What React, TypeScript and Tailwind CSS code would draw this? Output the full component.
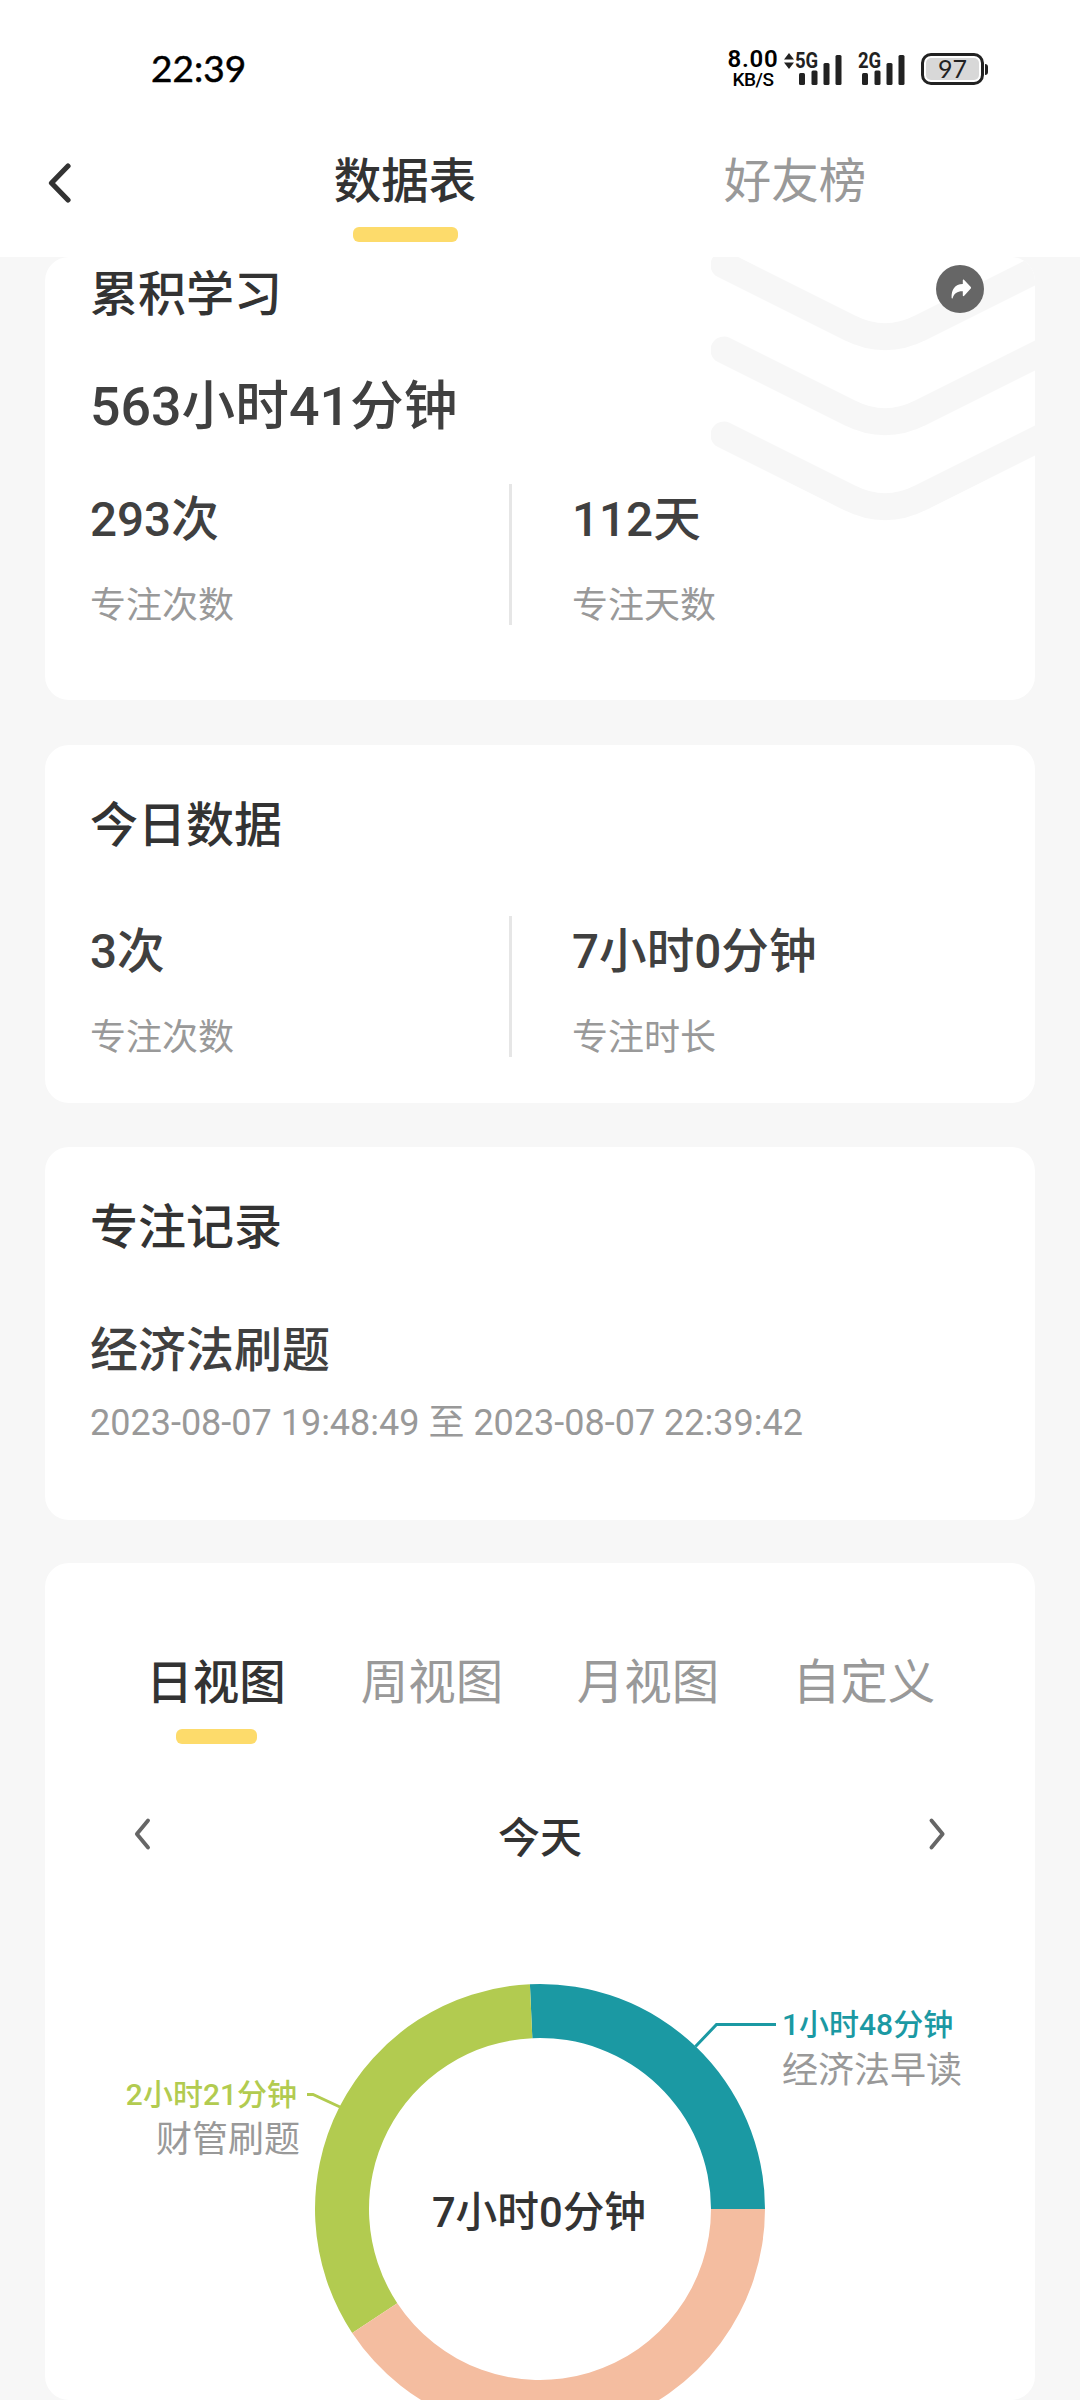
import type { ReactNode } from 'react'

const CENTER = 225
const OUTER = 225
const INNER = 171

const slices = [
  { name: '经济法早读', minutes: 108, color: '#1b99a3' },
  { name: '财管刷题', minutes: 141, color: '#b2cb50' },
  { name: '经济法刷题', minutes: 171, color: '#f4bda0' },
]

const headerTabs = ['数据表', '好友榜']
const viewTabs = ['日视图', '周视图', '月视图', '自定义']

function point(radius: number, angle: number) {
  return `${CENTER + radius * Math.cos(angle)} ${CENTER - radius * Math.sin(angle)}`
}

function arcPath(start: number, end: number) {
  return [
    `M ${point(OUTER, start)}`,
    `A ${OUTER} ${OUTER} 0 0 0 ${point(OUTER, end)}`,
    `L ${point(INNER, end)}`,
    `A ${INNER} ${INNER} 0 0 1 ${point(INNER, start)}`,
    'Z',
  ].join(' ')
}

function Chevron({ className, d, width }: { className: string; d: string; width: number }) {
  return (
    <svg viewBox="0 0 24 44" className={className} fill="none" stroke="currentColor" strokeWidth={width} strokeLinecap="round" strokeLinejoin="round">
      <path d={d} />
    </svg>
  )
}

function Signal({ label }: { label: string }) {
  return (
    <div className="relative h-8 w-12 text-[#222]">
      <span className="absolute -top-px -left-px origin-left scale-x-[0.84] text-[22px] leading-[18px] font-bold">{label}</span>
      <svg viewBox="0 0 48 32" className="h-8 w-12" fill="currentColor">
        <rect x="3" y="20" width="6" height="12" rx="1.5" />
        <rect x="15.5" y="17.5" width="6" height="14.5" rx="1.5" />
        <rect x="27.5" y="10" width="6" height="22" rx="1.5" />
        <rect x="39.5" y="2" width="6" height="30" rx="1.5" />
      </svg>
    </div>
  )
}

function StatusBar() {
  return (
    <div className="flex h-[138px] items-center justify-between pr-[92px] pl-[151px]">
      <span className="-mt-1 font-[Lato] text-[37px] leading-none text-black [-webkit-text-stroke:0.5px_black]">22:39</span>
      <div className="flex items-center">
        <div className="flex w-[52px] flex-col items-center text-black">
          <span className="text-[24px] leading-[18px] font-semibold tracking-[0.8px]">8.00</span>
          <span className="mt-[4px] text-[19px] leading-[16px] font-medium tracking-[-0.5px]">KB/S</span>
        </div>
        <svg viewBox="0 0 10 32" className="ml-[5px] h-8 w-2.5" fill="#222">
          <path d="M5 0 10 6.5H0zM5 16 0 9.5h10z" />
        </svg>
        <div className="ml-0.5 flex gap-[15px]">
          <Signal label="5G" />
          <Signal label="2G" />
        </div>
        <div className="ml-[14px] flex items-center">
          <div className="h-8 w-[63px] rounded-[10px] border-[3px] border-[#222] p-[2px]">
            <div className="flex h-full items-center justify-center rounded-[5px] bg-[#d8d8d8] pb-0.5 font-[Lato] text-[25px] leading-none text-[#222]">97</div>
          </div>
          <div className="ml-px h-[11px] w-[3px] rounded-r-sm bg-[#222]" />
        </div>
      </div>
    </div>
  )
}

function Header() {
  return (
    <header className="h-[257px] bg-white">
      <StatusBar />
      <div className="flex">
        <button className="flex h-[89px] w-[210px] items-center pl-[47px] text-[#333]">
          <Chevron className="h-11 w-6" d="M21 5 4.5 22 21 39" width={5.2} />
        </button>
        {headerTabs.map((tab, i) => (
          <button key={tab} className="flex w-[390px] flex-col items-center pt-5">
            <span className={i === 0 ? 'text-[47.5px] leading-[48px] font-medium text-[#333]' : 'text-[47.5px] leading-[48px] text-[#999]'}>{tab}</span>
            {i === 0 && <span className="mt-[21px] h-[15px] w-[105px] rounded-md bg-[#fddb6b]" />}
          </button>
        ))}
      </div>
    </header>
  )
}

function Card({ className, children }: { className: string; children: ReactNode }) {
  return <section className={`relative overflow-hidden rounded-3xl bg-white px-[45px] ${className}`}>{children}</section>
}

function CardTitle({ children }: { children: ReactNode }) {
  return <h2 className="text-[48px] leading-[48px] font-medium text-[#333]">{children}</h2>
}

function Stat({ value, label }: { value: string; label: string }) {
  return (
    <div className="pt-3">
      <p className="text-[47.6px] leading-[48px] font-medium text-[#404040]">{value}</p>
      <p className="mt-11 text-[36px] leading-[36px] text-[#999]">{label}</p>
    </div>
  )
}

function StatRow({ className, children }: { className: string; children: [ReactNode, ReactNode] }) {
  return (
    <div className={`flex h-[141px] ${className}`}>
      <div className="w-[419px]">{children[0]}</div>
      <div className="w-[3px] bg-[#e6e6e6]" />
      <div className="pl-[60px]">{children[1]}</div>
    </div>
  )
}

function DonutChart() {
  const total = slices.reduce((sum, s) => sum + s.minutes, 0)
  let angle = 0
  return (
    <div className="relative mt-[124px] h-[416px]">
      <svg viewBox="0 0 450 416" className="absolute top-0 left-[225px] h-[416px] w-[450px] overflow-visible">
        {slices.map((s) => {
          const start = angle
          angle += (s.minutes / total) * Math.PI * 2
          return <path key={s.name} d={arcPath(start, angle)} fill={s.color} />
        })}
        <path d="M380.5 62.5 401.5 40.5H461" fill="none" stroke="#1b99a3" strokeWidth="3" />
        <path d="M25 123-2 110.5H-8" fill="none" stroke="#b2cb50" strokeWidth="3" />
      </svg>
      <p className="absolute top-[208px] -left-px w-full text-center text-[41.7px] leading-[42px] font-medium text-[#333]">7小时0分钟</p>
      <div className="absolute top-[26px] left-[692px] whitespace-nowrap">
        <p className="text-[30px] leading-[30px] font-medium text-[#1b99a3]">1小时48分钟</p>
        <p className="mt-[13px] text-[36px] leading-[36px] text-[#999]">经济法早读</p>
      </div>
      <div className="absolute top-[96px] right-[690px] text-right whitespace-nowrap">
        <p className="pr-[3px] text-[30px] leading-[30px] font-medium text-[#b2cb50]">2小时21分钟</p>
        <p className="mt-[12px] text-[36px] leading-[36px] text-[#999]">财管刷题</p>
      </div>
    </div>
  )
}

export default function App() {
  return (
    <div className="h-[2400px] w-[1080px] overflow-hidden bg-[#f7f7f7] font-[Roboto,'Noto_Sans_CJK_SC',sans-serif]">
      <Header />

      <main className="px-[45px]">
        {/* Total */}
        <Card className="h-[443px] pt-3.5">
          <svg viewBox="0 0 324 270" className="absolute top-0 right-0 h-[270px] w-[324px]" fill="none" stroke="#f7f7f7" strokeWidth="27" strokeLinecap="round">
            <path d="M13 8 139 71Q174 88.5 209 71L350 0.5" />
            <path d="M13 93 139 156Q174 173.5 209 156L350 85.5" />
            <path d="M13 178 139 241Q174 258.5 209 241L350 170.5" />
          </svg>
          <button className="absolute top-2 right-[51px] h-12 w-12 rounded-full bg-[#666]">
            <svg viewBox="0 0 48 48" className="h-12 w-12" fill="#fff">
              <path d="M26.8 15.3c0-.8.8-1 1.4-.4l6.6 7.2c.4.5.4 1 0 1.5l-6.6 7.2c-.6.6-1.4.4-1.4-.4v-4.2c-5.2-.2-8.5 1.8-10.2 7-.2.6-1 .5-1-.1-.4-8.4 3.2-13.8 11.2-14z" />
            </svg>
          </button>
          <CardTitle>累积学习</CardTitle>
          <p className="mt-[61px] text-[53.7px] leading-[54px] font-medium text-[#404040]">563小时41分钟</p>
          <StatRow className="mt-[50px]">
            <Stat value="293次" label="专注次数" />
            <Stat value="112天" label="专注天数" />
          </StatRow>
        </Card>

        {/* Today */}
        <Card className="mt-[45px] h-[358px] pt-[57px]">
          <CardTitle>今日数据</CardTitle>
          <StatRow className="mt-[66px]">
            <Stat value="3次" label="专注次数" />
            <Stat value="7小时0分钟" label="专注时长" />
          </StatRow>
        </Card>

        {/* Records */}
        <Card className="mt-11 h-[373px] pt-[57px]">
          <CardTitle>专注记录</CardTitle>
          <p className="mt-[75px] text-[48px] leading-[48px] font-medium text-[#404040]">经济法刷题</p>
          <p className="mt-[30px] text-[36px] leading-[36px] text-[#999]">2023-08-07 19:48:49 至 2023-08-07 22:39:42</p>
        </Card>

        {/* Distribution */}
        <Card className="mt-[43px] h-[837px] pt-24">
          <div className="mx-[18px] grid grid-cols-4">
            {viewTabs.map((tab, i) => (
              <button key={tab} className="flex h-[85px] flex-col items-center">
                <span className={i === 0 ? 'text-[46.5px] leading-[48px] font-medium text-[#333]' : 'text-[47.5px] leading-[48px] text-[#999]'}>{tab}</span>
                {i === 0 && <span className="mt-[22px] h-[15px] w-[81px] rounded-md bg-[#fddb6b]" />}
              </button>
            ))}
          </div>
          <div className="mx-[43px] mt-[74px] flex h-[42px] items-center justify-between text-[#666]">
            <Chevron className="-mt-2.5 h-[34px] w-[18.5px]" d="M19.5 4.5 5 22l14.5 17.5" width={5} />
            <span className="text-[42px] leading-[42px] font-medium text-[#333]">今天</span>
            <Chevron className="-mt-2.5 h-[34px] w-[18.5px]" d="M4.5 4.5 19 22 4.5 39.5" width={5} />
          </div>
          <DonutChart />
        </Card>
      </main>
    </div>
  )
}
